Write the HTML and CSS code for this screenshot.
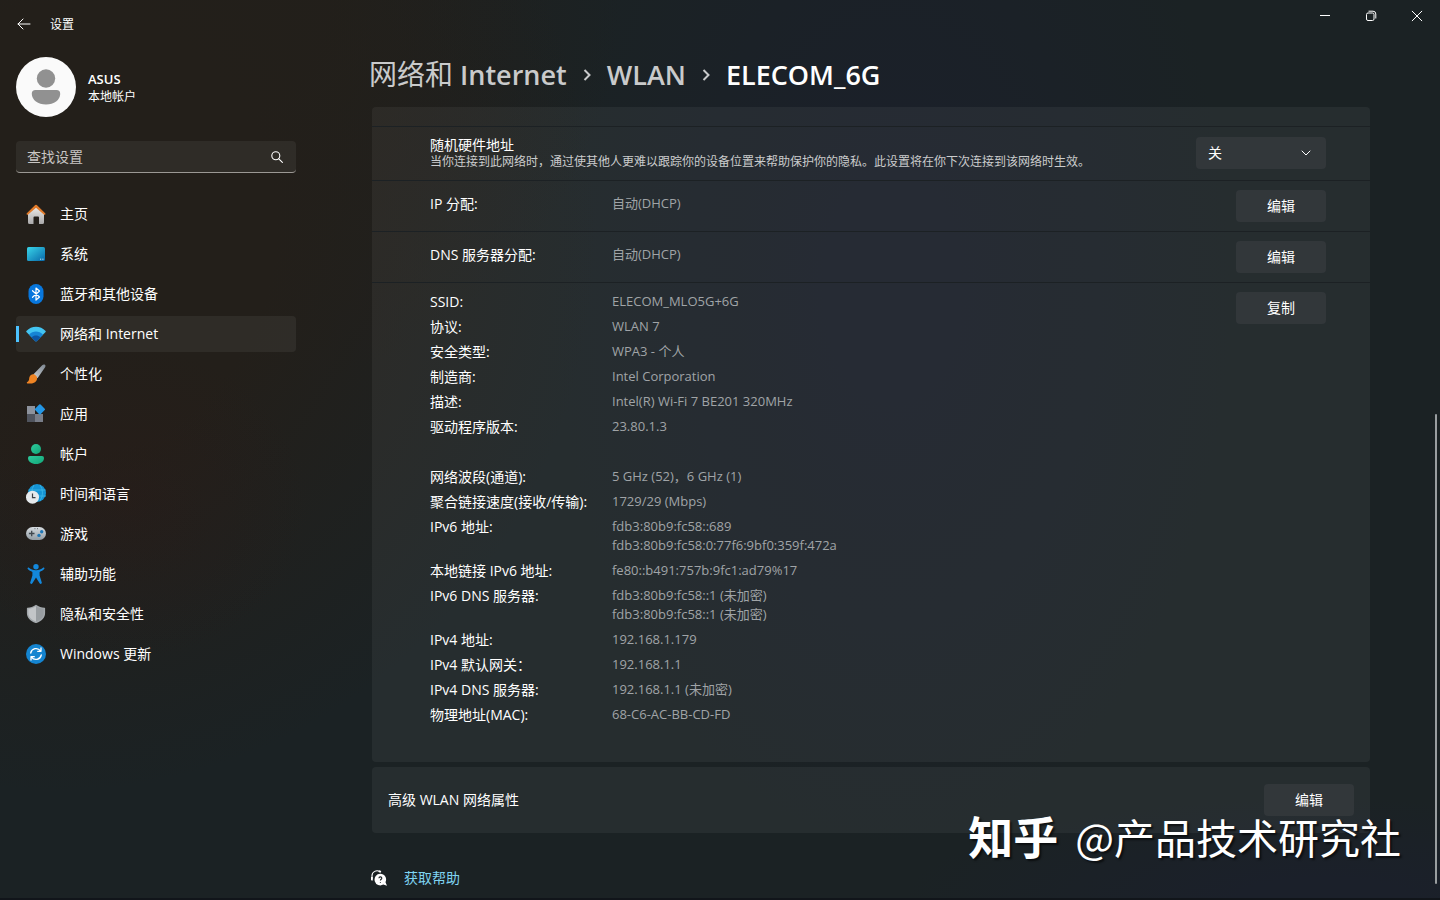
FILE: index.html
```html
<!DOCTYPE html>
<html lang="zh-CN">
<head>
<meta charset="utf-8">
<meta name="viewport" content="width=device-width, initial-scale=1">
<title>设置</title>
<link rel="stylesheet" href="styles.css">
</head>
<body>
<div class="window">
  <header class="titlebar">
    <button class="back" type="button" aria-label="返回">
      <svg width="14" height="12" viewBox="0 0 14 12" fill="none" stroke="currentColor" stroke-linecap="round" stroke-linejoin="round"><path d="M13 6H1M6 1L1 6l5 5"/></svg>
    </button>
    <span class="app-name">设置</span>
    <div class="caption">
      <button type="button" aria-label="最小化"><svg width="12" height="12" viewBox="0 0 12 12" stroke="currentColor"><path d="M1 5.500h10"/></svg></button>
      <button type="button" aria-label="还原"><svg width="12" height="12" viewBox="0 0 12 12" fill="none" stroke="currentColor"><rect x="1.500" y="3" width="7.500" height="7.500" rx="1.500"/><path d="M3.500 1.200h4.500a2.800 2.800 0 0 1 2.800 2.800v4.500"/></svg></button>
      <button type="button" aria-label="关闭"><svg width="12" height="12" viewBox="0 0 12 12" stroke="currentColor" stroke-linecap="round"><path d="M1.200 1.200l9.600 9.600M10.800 1.200l-9.600 9.600"/></svg></button>
    </div>
  </header>

  <div class="columns">
    <aside class="sidebar">
      <div class="account">
        <svg class="avatar" width="60" height="60" viewBox="0 0 60 60"><circle cx="30" cy="30" r="30" fill="#fafafa"/><circle cx="30" cy="21.500" r="9.200" fill="#919191"/><path d="M19.500 33h21a3.700 3.700 0 0 1 3.700 3.700c0 6.300-6.200 10.800-14.200 10.800s-14.200-4.500-14.200-10.800a3.700 3.700 0 0 1 3.700-3.700z" fill="#919191"/></svg>
        <div>
          <div class="account-name">ASUS</div>
          <div class="account-kind">本地帐户</div>
        </div>
      </div>

      <label class="search">
        <input type="text" placeholder="查找设置" aria-label="查找设置">
        <svg width="12" height="12" viewBox="0 0 12 12" fill="none" stroke="currentColor" stroke-width="1.100" stroke-linecap="round"><circle cx="4.800" cy="4.800" r="4"/><path d="M7.800 7.800l3.600 3.600"/></svg>
      </label>

      <nav class="nav">
        <a href="#home"><svg viewBox="0 0 20 20"><defs><linearGradient id="hw" x1="0" y1="0" x2="0" y2="1"><stop offset="0" stop-color="#f0eeec"/><stop offset="1" stop-color="#a9a9aa"/></linearGradient></defs><path d="M2 9l8-7 8 7v9.500a1.500 1.500 0 0 1-1.500 1.500H13v-6.500a1 1 0 0 0-1-1H8.500a1 1 0 0 0-1 1V20H3.500A1.500 1.500 0 0 1 2 18.500z" fill="url(#hw)"/><path d="M.8 9.200L9.200 1a1.200 1.200 0 0 1 1.600 0l8.400 8.200a.9.900 0 0 1-1.300 1.300L10 3.800l-7.900 6.700A.9.900 0 0 1 .8 9.200z" fill="#e17a2a"/></svg>主页</a>
        <a href="#system"><svg viewBox="0 0 20 20"><defs><linearGradient id="sy" x1="0" y1="0" x2="1" y2="1"><stop offset="0" stop-color="#39d5e9"/><stop offset="1" stop-color="#0868a9"/></linearGradient></defs><rect x="1" y="3" width="18" height="14" rx="1.600" fill="url(#sy)"/><path d="M14 15.200h1.200M16.300 15.200h1.200" stroke="#c8e4ef"/></svg>系统</a>
        <a href="#bluetooth"><svg viewBox="0 0 20 20"><rect x="2.500" y="0" width="15" height="20" rx="7.500" fill="#0877dd"/><path d="M6.500 6.700l7 6.300L10 16V4l3.500 3-7 6.300" fill="none" stroke="#fff" stroke-width="1.200" stroke-linejoin="round" stroke-linecap="round"/></svg>蓝牙和其他设备</a>
        <a class="active" href="#network" aria-current="page"><svg viewBox="0 0 20 20"><path d="M.4 7C5.400 1.300 14.600 1.300 19.600 7a.8.800 0 0 1 0 1L10.800 17a1.100 1.100 0 0 1-1.600 0L.4 8a.8.800 0 0 1 0-1z" fill="#43c5f2"/><path d="M3 10.700c3.800-4.400 10.200-4.400 14 0L10.800 17a1.100 1.100 0 0 1-1.600 0z" fill="#1684d5"/><path d="M5.700 13.500c2.300-2.600 6.300-2.600 8.600 0L10.800 17a1.100 1.100 0 0 1-1.600 0z" fill="#0c55a5"/></svg>网络和 Internet</a>
        <a href="#personalization"><svg viewBox="0 0 20 20"><defs><linearGradient id="pb" x1="1" y1="0" x2="0" y2="1"><stop offset="0" stop-color="#7c8690"/><stop offset="1" stop-color="#c9ced2"/></linearGradient></defs><path d="M18.900.8c.8.700.7 1.700.2 2.500L11.500 14.200 7.300 10.500 16.200 1.200c.8-.8 2-1.100 2.700-.4z" fill="url(#pb)"/><path d="M7 10.300c1.900 0 4.200 1.900 4.100 4.100C10.900 18.500 6 20 1.500 19.500c-.9-.1-.9-1-.2-1.400 2.500-1.600 1.400-3 2.300-5.300.6-1.600 1.900-2.500 3.400-2.500z" fill="#ef8424"/></svg>个性化</a>
        <a href="#apps"><svg viewBox="0 0 20 20"><rect x="1" y="2" width="8" height="8" fill="#8d929c"/><rect x="1" y="10" width="8" height="8" fill="#50545e"/><rect x="9" y="10" width="8" height="8" fill="#787d88"/><rect x="10" y="1.500" width="7.800" height="7.800" rx="1" transform="rotate(45 13.900 5.400)" fill="#2396e5"/></svg>应用</a>
        <a href="#accounts"><svg viewBox="0 0 20 20"><defs><linearGradient id="ac" x1="0" y1="0" x2="1" y2="1"><stop offset="0" stop-color="#2ecb9d"/><stop offset="1" stop-color="#12a577"/></linearGradient></defs><circle cx="10" cy="5" r="5" fill="url(#ac)"/><path d="M4 12h12a2 2 0 0 1 2 2c0 3.600-3.400 6-8 6s-8-2.400-8-6a2 2 0 0 1 2-2z" fill="url(#ac)"/></svg>帐户</a>
        <a href="#time"><svg viewBox="0 0 20 20"><circle cx="11" cy="9" r="9" fill="#1594d5"/><path d="M8 1a14 14 0 0 0 0 15M14 .8a14 14 0 0 1 0 16M2.500 6h17M8 12h12" stroke="#3fb9e6" stroke-width=".8" fill="none"/><circle cx="6.500" cy="13.200" r="6.500" fill="#e5e9ec"/><path d="M6.500 9.500v4.200h3" stroke="#3b4045" stroke-width="1.200" fill="none"/></svg>时间和语言</a>
        <a href="#gaming"><svg viewBox="0 0 20 20"><defs><linearGradient id="gm" x1="0" y1="0" x2="0" y2="1"><stop offset="0" stop-color="#d6dce0"/><stop offset="1" stop-color="#929ca4"/></linearGradient></defs><rect x="0" y="3" width="20" height="13" rx="6.500" fill="url(#gm)"/><path d="M5.700 6.700v5.600M2.900 9.500h5.600" stroke="#3f474e" stroke-width="1.300"/><circle cx="15.700" cy="7.700" r="1.700" fill="#1e77b7"/><circle cx="13" cy="11.400" r="1.700" fill="#1e77b7"/><path d="M8.500 4.700h.9M11 4.700h.9" stroke="#525b62"/></svg>游戏</a>
        <a href="#accessibility"><svg viewBox="0 0 20 20" fill="#1388dc"><circle cx="10" cy="2.700" r="2.700"/><path d="M3 3.800c1.500 1.500 4.200 2.400 7 2.400s5.500-.9 7-2.400c.8-.8 2 .4 1.200 1.300-1.200 1.300-2.900 2.200-4.600 2.800v3.600l2.200 7c.4 1.300-1.600 2-2.200.8L10 13.500l-3.600 5.800c-.6 1.200-2.600.5-2.200-.8l2.200-7V7.900C4.700 7.300 3 6.400 1.800 5.100 1 4.200 2.200 3 3 3.800z"/></svg>辅助功能</a>
        <a href="#privacy"><svg viewBox="0 0 20 20"><path d="M10 .8c2.800 2 5.500 2.700 8.600 2.900a.5.500 0 0 1 .5.500V9c0 4.800-3.300 8-8.600 10a1.400 1.400 0 0 1-1 0C4.200 17 .9 13.800.9 9V4.200a.5.500 0 0 1 .5-.5C4.500 3.500 7.200 2.800 10 .8z" fill="#a3a8ac"/><path d="M10 2.300c2.300 1.500 4.800 2.300 7.600 2.500V9c0 3.900-2.700 6.700-7.600 8.600z" fill="#989da1"/><path d="M10 2.300C7.700 3.800 5.200 4.600 2.400 4.800V9c0 3.900 2.700 6.700 7.600 8.600z" fill="#c2c5c8"/></svg>隐私和安全性</a>
        <a href="#update"><svg viewBox="0 0 20 20"><circle cx="10" cy="10" r="10" fill="#1484d0"/><path d="M4.700 9a5.500 5.500 0 0 1 9.800-2.200M15.300 11a5.500 5.500 0 0 1-9.800 2.200M15 4v3.300h-3.300M5 16v-3.300h3.300" fill="none" stroke="#fff" stroke-width="1.300" stroke-linecap="round" stroke-linejoin="round"/></svg>Windows 更新</a>
      </nav>
    </aside>

    <main class="main">
      <h1 class="crumbs">
        <a href="#network"><span class="han">网络和</span> Internet</a>
        <svg width="8" height="12" viewBox="0 0 8 12"><path d="M1.500 1l5 5-5 5"/></svg>
        <a href="#wlan">WLAN</a>
        <svg width="8" height="12" viewBox="0 0 8 12"><path d="M1.500 1l5 5-5 5"/></svg>
        <span class="current">ELECOM_6G</span>
      </h1>

      <section class="card">
        <div class="row sliver"></div>
        <div class="row random">
          <div class="grow">
            <label class="label" for="random">随机硬件地址</label>
            <div class="hint">当你连接到此网络时，通过使其他人更难以跟踪你的设备位置来帮助保护你的隐私。此设置将在你下次连接到该网络时生效。</div>
          </div>
          <div class="select">
            <select id="random"><option>关</option><option>开</option></select>
            <svg width="10" height="6" viewBox="0 0 10 6" fill="none" stroke="currentColor" stroke-linecap="round" stroke-linejoin="round"><path d="M1 1l4 4 4-4"/></svg>
          </div>
        </div>
        <div class="row">
          <dl class="facts"><dt>IP 分配:</dt><dd>自动(DHCP)</dd></dl>
          <button class="btn" type="button">编辑</button>
        </div>
        <div class="row">
          <dl class="facts"><dt>DNS 服务器分配:</dt><dd>自动(DHCP)</dd></dl>
          <button class="btn" type="button">编辑</button>
        </div>
        <div class="row details">
          <dl class="facts">
            <dt>SSID:</dt><dd>ELECOM_MLO5G+6G</dd>
            <dt>协议:</dt><dd>WLAN 7</dd>
            <dt>安全类型:</dt><dd>WPA3 - 个人</dd>
            <dt>制造商:</dt><dd>Intel Corporation</dd>
            <dt>描述:</dt><dd>Intel(R) Wi-Fi 7 BE201 320MHz</dd>
            <dt>驱动程序版本:</dt><dd>23.80.1.3</dd>
            <dt class="apart">网络波段(通道):</dt><dd class="apart">5 GHz (52)，6 GHz (1)</dd>
            <dt>聚合链接速度(接收/传输):</dt><dd>1729/29 (Mbps)</dd>
            <dt>IPv6 地址:</dt><dd>fdb3:80b9:fc58::689<br>fdb3:80b9:fc58:0:77f6:9bf0:359f:472a</dd>
            <dt>本地链接 IPv6 地址:</dt><dd>fe80::b491:757b:9fc1:ad79%17</dd>
            <dt>IPv6 DNS 服务器:</dt><dd>fdb3:80b9:fc58::1 (未加密)<br>fdb3:80b9:fc58::1 (未加密)</dd>
            <dt>IPv4 地址:</dt><dd>192.168.1.179</dd>
            <dt>IPv4 默认网关：</dt><dd>192.168.1.1</dd>
            <dt>IPv4 DNS 服务器:</dt><dd>192.168.1.1 (未加密)</dd>
            <dt>物理地址(MAC):</dt><dd>68-C6-AC-BB-CD-FD</dd>
          </dl>
          <button class="btn" type="button">复制</button>
        </div>
      </section>

      <section class="card advanced">
        <span class="label grow">高级 WLAN 网络属性</span>
        <button class="btn" type="button">编辑</button>
      </section>

      <div class="help">
        <svg width="16" height="16" viewBox="0 0 16 16"><path d="M1 9V6A5 5 0 0 1 9 1.800" fill="none" stroke="#fff" stroke-width="1.100"/><path d="M0 7h1.800v3.500H.8A.8.800 0 0 1 0 9.700zM8 .3l2.300.8-.7 1.700-2.100-.9z" fill="#fff"/><path d="M9.300 3.800a5.800 5.800 0 0 1 5.200 8.400l1.500 3.600-3.700-1.200A5.800 5.800 0 1 1 9.300 3.800z" fill="#fff"/><path d="M7.900 8.200c.1-1.900 3-1.700 2.900 0 0 1-1.400 1.100-1.400 2.300M9.400 12v.8" fill="none" stroke="#1b2224" stroke-width="1.100"/></svg>
        <a href="#help">获取帮助</a>
      </div>
    </main>
  </div>
  <div class="scroll-thumb"></div>
  <div class="watermark"><b>知乎</b><span>@产品技术研究社</span></div>
</div>
</body>
</html>
```

FILE: styles.css
```css
* { box-sizing: border-box; }

body {
  margin: 0;
  color: #fff;
  font: 14px/20px "Open Sans", "Noto Sans CJK SC", sans-serif;
  background: #1b2224;
}

button, input, select { font: inherit; color: inherit; border: 0; margin: 0; }
a { color: inherit; text-decoration: none; }

.window {
  position: relative;
  min-height: 100vh;
  border-bottom: 2px solid #11151a;
  background:
    radial-gradient(ellipse 180px 160px at 9% 56%, rgba(44, 26, 23, .35), transparent),
    radial-gradient(ellipse 540px 560px at 4% 26%, #231f1a 40%, transparent),
    radial-gradient(ellipse 420px 400px at 14% 0, #211f1b 30%, transparent),
    radial-gradient(ellipse 340px 560px at 62% 32%, #1b202a 20%, transparent),
    radial-gradient(ellipse 420px 100px at 92% 100%, #1b202a 20%, transparent),
    #1b2224;
}

.titlebar { display: flex; align-items: flex-start; height: 48px; padding-left: 8px; }
.back { display: grid; place-items: center; width: 32px; height: 48px; padding: 0; background: none; }
.app-name { flex: 1; padding-left: 10px; font-size: 12px; line-height: 50px; }
.caption { display: flex; }
.caption button { display: grid; place-items: center; width: 46px; height: 32px; padding: 0; background: none; }

.columns { display: flex; }

.sidebar { flex: none; width: 296px; padding: 9px 0 0 16px; }
.account { display: flex; align-items: center; gap: 12px; font-size: 12px; line-height: 18px; }
.account > div { padding-top: 2px; }
.account-name { font-size: 13px; font-weight: 600; }

.search {
  display: flex;
  align-items: center;
  height: 32px;
  margin: 24px 0 23px;
  padding: 0 13px 0 11px;
  border-bottom: 1px solid #9b9894;
  border-radius: 4px;
  background: rgba(255, 255, 255, .06);
}
.search input { flex: 1; min-width: 0; padding: 0; background: none; outline: 0; }
.search input::placeholder { color: #c8c6c4; opacity: 1; }

.nav { display: grid; gap: 4px; }
.nav a {
  display: flex;
  align-items: center;
  gap: 14px;
  height: 36px;
  padding-left: 10px;
  border-radius: 4px;
}
.nav svg { width: 20px; height: 20px; }
.nav .active {
  background:
    linear-gradient(#4cc2ff, #4cc2ff) 0 50% / 3px 16px no-repeat,
    rgba(255, 255, 255, .06);
}

.main { flex: 1; min-width: 0; padding: 6px 70px 0 76px; }

.crumbs {
  display: flex;
  align-items: center;
  gap: 16px;
  margin: 0 0 12px -3px;
  font-size: 27px;
  font-weight: 600;
  line-height: 40px;
}
.crumbs a { color: #c9cacb; }
.crumbs .han { font-size: 28px; font-weight: 400; }
.crumbs svg { fill: none; stroke: #c9cacb; stroke-width: 2; }

.card { border-radius: 4px; background: rgba(255, 255, 255, .05); }
.row {
  display: flex;
  align-items: flex-start;
  padding: 9px 44px 9px 58px;
  border-bottom: 1px solid #1c2124;
}
.sliver { height: 20px; padding: 0; }
.random { align-items: center; padding-top: 9px; padding-bottom: 10px; }
.grow { flex: 1; }
.random .label { display: block; line-height: 18px; }
.hint { color: #cbcccd; font-size: 12px; line-height: 16px; }

.select { position: relative; }
.select select {
  display: block;
  width: 130px;
  height: 32px;
  padding: 0 12px;
  border-radius: 4px;
  background: #32373a;
  appearance: none;
}
.select svg { position: absolute; right: 15px; top: 13px; pointer-events: none; }

.btn { width: 90px; height: 32px; padding: 0; border-radius: 4px; background: #32373a; }

.facts {
  flex: 1;
  display: grid;
  grid-template-columns: 182px 1fr;
  row-gap: 6px;
  margin: 0;
  padding-top: 4px;
  line-height: 19px;
}
.facts dd { margin: 0; color: #a0a4a7; font-size: 13px; }
.facts .apart { margin-top: 25px; }
.details { padding-bottom: 38px; border-bottom: 0; }
.details .facts { padding-top: 0; }

.advanced { display: flex; align-items: center; height: 66px; margin-top: 5px; padding: 0 16px; }

.help { display: flex; align-items: center; gap: 17px; margin-top: 35px; margin-left: -1px; }
.help a { color: #7fd4f2; }

.scroll-thumb {
  position: absolute;
  right: 3px;
  bottom: 14px;
  width: 2px;
  height: 470px;
  border-radius: 1px;
  background: #9a9ea0;
}

.watermark {
  position: absolute;
  right: 39px;
  bottom: 38px;
  display: flex;
  align-items: center;
  gap: 17px;
  font-family: "Noto Sans CJK SC", sans-serif;
  font-size: 41px;
  line-height: 48px;
  white-space: nowrap;
  text-shadow: 2px 2px 2px rgba(0, 0, 0, .6);
  pointer-events: none;
}
.watermark b { font-size: 45px; }
```
